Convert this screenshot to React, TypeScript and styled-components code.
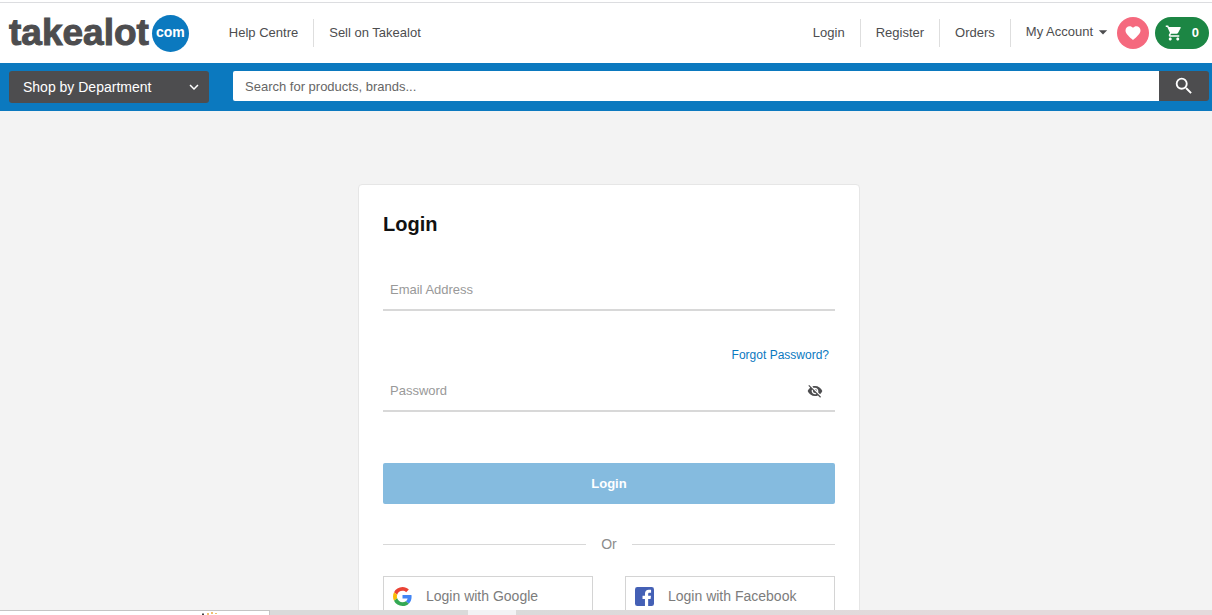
import React from "react";
import styled, { createGlobalStyle } from "styled-components";
import {
  MdArrowDropDown,
  MdFavorite,
  MdKeyboardArrowDown,
  MdSearch,
  MdShoppingCart,
  MdVisibilityOff,
} from "react-icons/md";

const sans = `"Liberation Sans", Arial, sans-serif`;

const GlobalStyle = createGlobalStyle`
  *, *::before, *::after { box-sizing: border-box; }
  body { margin: 0; background: #f3f3f3; color: #4d4d4f; font: 13px/20px ${sans}; }
  button, input { font: inherit; color: inherit; margin: 0; }
  button { cursor: pointer; }
  a { color: inherit; text-decoration: none; }
`;

const Page = styled.div`
  display: flex;
  flex-direction: column;
  height: 100vh;
  overflow: hidden;
`;

const TopBar = styled.header`
  flex: none;
  display: flex;
  align-items: center;
  height: 63px;
  padding: 3px 3px 0 9px;
  background: linear-gradient(#ffffff 2px, #dcdde0 2px, #dcdde0 3px, #ffffff 3px);
`;

const Logo = styled.a`
  display: flex;
  align-items: center;
  gap: 3px;
  margin-right: 25px;
`;

const LogoWord = styled.span`
  font-size: 37px;
  line-height: 40px;
  font-weight: 700;
  color: #4d4d4f;
  -webkit-text-stroke: 1px #4d4d4f;
`;

const LogoBadge = styled.span`
  display: flex;
  align-items: center;
  justify-content: center;
  width: 37px;
  height: 37px;
  border-radius: 50%;
  background: #0b79bf;
  color: #ffffff;
  font-size: 14px;
  line-height: 16px;
  font-weight: 700;
  padding-bottom: 2px;
`;

const Nav = styled.nav<{ $end?: boolean }>`
  display: flex;
  align-items: center;
  margin-left: ${(p) => (p.$end ? "auto" : "0")};
`;

const NavItem = styled.a`
  display: flex;
  align-items: center;
  height: 28px;
  padding: 0 15px;
  & + & {
    border-left: 1px solid #dedede;
  }
`;

const AccountButton = styled.button`
  display: flex;
  align-items: center;
  height: 28px;
  padding: 0 4px 2px 15px;
  border: 0;
  border-left: 1px solid #dedede;
  background: none;
`;

const WishButton = styled.button`
  display: flex;
  align-items: center;
  justify-content: center;
  width: 32px;
  height: 32px;
  padding: 0;
  border: 0;
  border-radius: 50%;
  background: #f5697e;
  color: #ffffff;
`;

const CartButton = styled.button`
  display: flex;
  align-items: center;
  justify-content: space-between;
  width: 54px;
  height: 32px;
  margin-left: 6px;
  padding: 0 10px;
  border: 0;
  border-radius: 16px;
  background: #1c8644;
  color: #ffffff;
  font-weight: 700;
`;

const SearchBar = styled.div`
  flex: none;
  display: flex;
  align-items: flex-start;
  gap: 24px;
  height: 48px;
  padding: 8px 3px 0 9px;
  background: #0b79bf;
`;

const DepartmentButton = styled.button`
  display: flex;
  align-items: center;
  justify-content: space-between;
  width: 200px;
  height: 32px;
  padding: 0 6px 0 14px;
  border: 0;
  border-radius: 3px;
  background: #4d4d4f;
  color: #ffffff;
  font-size: 14px;
`;

const SearchForm = styled.form`
  flex: 1;
  display: flex;
  height: 30px;
`;

const SearchInput = styled.input`
  flex: 1;
  min-width: 0;
  padding: 1px 12px 0;
  border: 0;
  border-radius: 2px 0 0 2px;
  background: #ffffff;
  outline: 0;
  &::placeholder {
    color: #666666;
    opacity: 1;
  }
`;

const SearchButton = styled.button`
  display: flex;
  align-items: center;
  justify-content: center;
  width: 50px;
  padding: 0;
  border: 0;
  border-radius: 0 3px 3px 0;
  background: #4d4d4f;
  color: #ffffff;
`;

const Main = styled.main`
  flex: 1;
  min-height: 0;
  overflow: hidden;
  padding: 73px 3px 0 9px;
`;

const Card = styled.form`
  display: flex;
  flex-direction: column;
  max-width: 502px;
  margin: 0 auto;
  padding: 24px;
  border: 1px solid #e6e6e6;
  border-radius: 4px;
  background: #ffffff;
`;

const Title = styled.h1`
  margin: 1px 0 32px;
  font-size: 20px;
  line-height: 28px;
  font-weight: 700;
  color: #111111;
`;

const Field = styled.div`
  display: flex;
  align-items: center;
  height: 41px;
  padding: 0 7px;
  border-bottom: 2px solid #d8d8d8;
`;

const FieldInput = styled.input`
  flex: 1;
  min-width: 0;
  padding: 0;
  border: 0;
  outline: 0;
  background: none;
  &::placeholder {
    color: #999999;
    opacity: 1;
  }
`;

const RevealButton = styled.button`
  display: flex;
  padding: 4px 5px;
  border: 0;
  background: none;
  color: #4d4d4f;
`;

const ForgotLink = styled.a`
  align-self: flex-end;
  margin: 34px 6px 6px 0;
  font-size: 12px;
  color: #0b79bf;
`;

const SubmitButton = styled.button`
  height: 41px;
  margin-top: 51px;
  border: 0;
  border-radius: 2px;
  background: #85bbdf;
  color: #ffffff;
  font-weight: 700;
`;

const Divider = styled.div`
  display: flex;
  align-items: center;
  gap: 15px;
  margin: 30px 0 22px;
  font-size: 14px;
  color: #8c8c8c;
  &::before,
  &::after {
    content: "";
    flex: 1;
    height: 1px;
    background: #d8d8d8;
  }
`;

const SocialRow = styled.div`
  display: grid;
  grid-template-columns: 1fr 1fr;
  gap: 32px;
`;

const SocialButton = styled.button`
  display: flex;
  align-items: center;
  gap: 14px;
  height: 40px;
  padding: 0 9px;
  border: 1px solid #d4d4d4;
  background: #ffffff;
  color: #7c7c7c;
  font-size: 14px;
`;

const TaskStrip = styled.footer`
  flex: none;
  display: flex;
  height: 5px;
  background: linear-gradient(90deg, #dadada 40%, #e4dadc 80%);
`;

const TaskSearch = styled.div`
  width: 270px;
  padding-left: 202px;
  border-top: 1px solid #c4c4c4;
  border-right: 1px solid #c4c4c4;
  background: #ffffff;
`;

const TaskActive = styled.div`
  width: 48px;
  margin-left: 198px;
  background: #f3f3f5;
`;

const ArtSvg = styled.svg`
  display: block;
  flex: none;
`;

function GoogleMark() {
  return (
    <ArtSvg width="19" height="19" viewBox="0 0 48 48" aria-hidden="true">
      <path fill="#EA4335" d="M24 9.5c3.54 0 6.71 1.22 9.21 3.6l6.85-6.85C35.9 2.38 30.47 0 24 0 14.62 0 6.51 5.38 2.56 13.22l7.98 6.19C12.43 13.72 17.74 9.5 24 9.5z" />
      <path fill="#4285F4" d="M46.98 24.55c0-1.57-.15-3.09-.38-4.55H24v9.02h12.94c-.58 2.96-2.26 5.48-4.78 7.18l7.73 6c4.51-4.18 7.09-10.36 7.09-17.65z" />
      <path fill="#FBBC05" d="M10.53 28.59c-.48-1.45-.76-2.99-.76-4.59s.27-3.14.76-4.59l-7.98-6.19C.92 16.46 0 20.12 0 24c0 3.88.92 7.54 2.56 10.78l7.97-6.19z" />
      <path fill="#34A853" d="M24 48c6.48 0 11.93-2.13 15.89-5.81l-7.73-6c-2.15 1.45-4.92 2.3-8.16 2.3-6.26 0-11.57-4.22-13.47-9.91l-7.98 6.19C6.51 42.62 14.62 48 24 48z" />
    </ArtSvg>
  );
}

function FacebookMark() {
  return (
    <ArtSvg width="19" height="19" viewBox="0 0 24 24" aria-hidden="true">
      <rect width="24" height="24" rx="3" fill="#4460b5" />
      <path
        fill="#ffffff"
        d="M12.6 24v-9H9.5v-3.9h3.1V8.6c0-3.2 1.9-5 4.8-5 1.3 0 2.6.1 2.9.2v3.5h-1.9c-1.5 0-1.8.7-1.8 1.7v2.1h3.6l-.5 3.9h-3.1v9z"
      />
    </ArtSvg>
  );
}

export default function App() {
  return (
    <Page>
      <GlobalStyle />
      <TopBar>
        <Logo href="#">
          <LogoWord>takealot</LogoWord>
          <LogoBadge>com</LogoBadge>
        </Logo>
        <Nav>
          <NavItem href="#">Help Centre</NavItem>
          <NavItem href="#">Sell on Takealot</NavItem>
        </Nav>
        <Nav $end>
          <NavItem href="#">Login</NavItem>
          <NavItem href="#">Register</NavItem>
          <NavItem href="#">Orders</NavItem>
          <AccountButton type="button">
            My Account
            <MdArrowDropDown size={20} />
          </AccountButton>
        </Nav>
        <WishButton type="button" aria-label="Wishlist">
          <MdFavorite size={18} />
        </WishButton>
        <CartButton type="button" aria-label="Cart">
          <MdShoppingCart size={18} />0
        </CartButton>
      </TopBar>
      <SearchBar>
        <DepartmentButton type="button">
          Shop by Department
          <MdKeyboardArrowDown size={18} />
        </DepartmentButton>
        <SearchForm>
          <SearchInput type="search" aria-label="Search" placeholder="Search for products, brands..." />
          <SearchButton type="button" aria-label="Search">
            <MdSearch size={22} />
          </SearchButton>
        </SearchForm>
      </SearchBar>
      <Main>
        <Card>
          <Title>Login</Title>
          <Field>
            <FieldInput type="email" aria-label="Email Address" placeholder="Email Address" />
          </Field>
          <ForgotLink href="#">Forgot Password?</ForgotLink>
          <Field>
            <FieldInput type="password" aria-label="Password" placeholder="Password" />
            <RevealButton type="button" aria-label="Show password">
              <MdVisibilityOff size={16} />
            </RevealButton>
          </Field>
          <SubmitButton type="button">Login</SubmitButton>
          <Divider>Or</Divider>
          <SocialRow>
            <SocialButton type="button">
              <GoogleMark />
              Login with Google
            </SocialButton>
            <SocialButton type="button">
              <FacebookMark />
              Login with Facebook
            </SocialButton>
          </SocialRow>
        </Card>
      </Main>
      <TaskStrip>
        <TaskSearch>
          <ArtSvg width="16" height="4" viewBox="0 0 16 4" aria-hidden="true">
            <path d="M0 3l1-1 1 1v1H0z" fill="#444444" />
            <path d="M5 2h2v2H5zM9 1h2v2H9zM13 2h2v1h-2z" fill="#f0c070" />
          </ArtSvg>
        </TaskSearch>
        <TaskActive />
      </TaskStrip>
    </Page>
  );
}
